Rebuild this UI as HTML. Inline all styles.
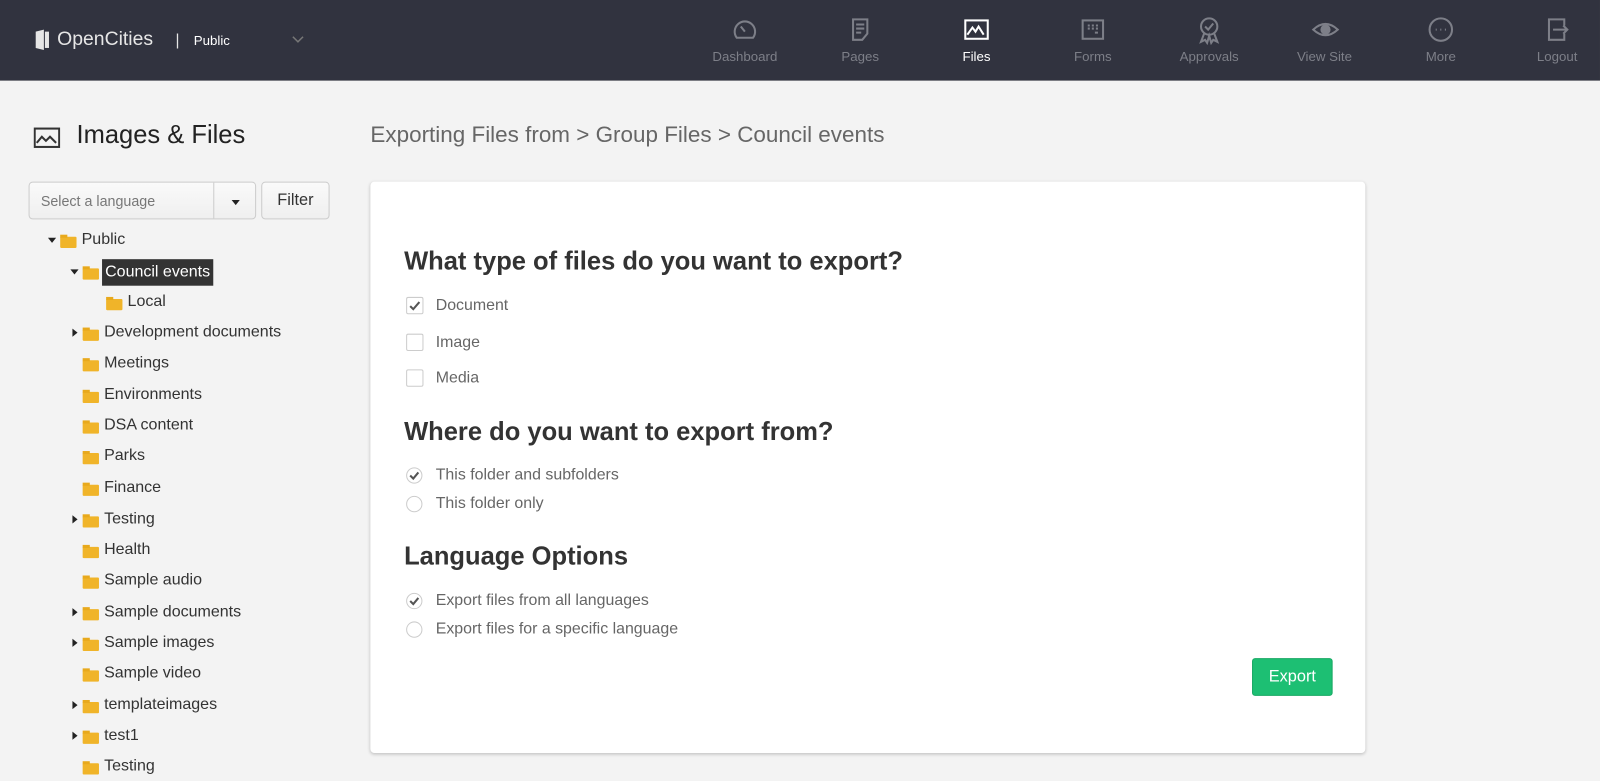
<!DOCTYPE html>
<html><head><meta charset="utf-8"><style>
*{box-sizing:border-box;margin:0;padding:0}
body{width:1600px;height:780px;overflow:hidden;background:#f3f3f3;font-family:"Liberation Sans",Arial,sans-serif;position:relative}
.wrap{position:absolute;left:0;top:0;width:1568px;height:765px;transform:scale(1.0204);transform-origin:0 0}
.hdr{position:absolute;left:0;top:0;width:1568px;height:79px;background:#31333f}
.logo{position:absolute;left:34px;top:28px;color:#e6e6e6;font-size:19px;display:flex;align-items:center}
.nav{position:absolute;top:0;width:114px;height:79px;text-align:center;color:#7d7f88;font-size:13px}
.nav svg{position:absolute;left:44px;top:16px}
.nav span{position:absolute;left:0;right:0;top:48px}
.nav.on{color:#fff}
.side-h{position:absolute;left:75px;top:118px;font-size:25px;color:#222}
.sel{position:absolute;left:28px;top:178px;width:223px;height:37px;border:1px solid #ccc;border-radius:4px;background:linear-gradient(#fafafa,#efefef);font-size:14px;color:#777}
.filt{position:absolute;left:256px;top:178px;width:67px;height:37px;border:1px solid #ccc;border-radius:4px;background:linear-gradient(#fafafa,#efefef);font-size:16px;color:#333;text-align:center;line-height:35px}
.t{position:absolute;font-size:15.7px;color:#333;height:22px;line-height:22px;white-space:nowrap}
.f{position:absolute;width:16px;height:11px;background:#f0b429;border-radius:1px}
.f:before{content:"";position:absolute;left:0;top:-2px;width:7px;height:3px;background:#e8a91c}
.tri{position:absolute;width:0;height:0}
.tri.d{border-left:4px solid transparent;border-right:4px solid transparent;border-top:5px solid #222}
.tri.r{border-top:4px solid transparent;border-bottom:4px solid transparent;border-left:5px solid #222}
.bc{position:absolute;left:363px;top:119px;font-size:22px;color:#666}
.card{position:absolute;left:363px;top:178px;width:975px;height:560px;background:#fff;border-radius:4px;box-shadow:0 1px 3px rgba(0,0,0,.2)}
.h{position:absolute;left:396px;font-size:25px;font-weight:bold;color:#333}
.o{position:absolute;left:427px;font-size:15.6px;color:#666}
.cb{position:absolute;left:398px;width:17px;height:17px;border:1px solid #ccc;border-radius:2px;background:#fff}
.rd{position:absolute;left:398px;width:16px;height:16px;border:1px solid #ccc;border-radius:50%;background:#fff}
.btn{position:absolute;left:1227px;top:645px;width:79px;height:37px;background:#1dbf73;border:1px solid #16a862;border-radius:3px;color:#fff;font-size:16px;text-align:center;line-height:35px}
</style></head><body><div class="wrap">
<div class="hdr">
 <div class="logo"><svg width="16" height="22" viewBox="0 0 16 22"><path d="M1 3 L9 1 L9 21 L1 19Z" fill="#e6e6e6"/><rect x="10" y="3" width="4" height="16" fill="#e6e6e6"/></svg><span style="margin-left:6px">OpenCities</span><span style="margin-left:22px;font-size:15px">|</span><span style="margin-left:14px;font-size:13px;color:#fff">Public</span></div>
 <svg style="position:absolute;left:286px;top:35px" width="12" height="8"><path d="M1 1 L6 6 L11 1" stroke="#777" stroke-width="1.5" fill="none"/></svg>
 <div class="nav" style="left:673px"><svg width="26" height="26" viewBox="0 0 26 26" fill="none" stroke="#7d7f88" stroke-width="2"><path d="M5 21 A10 10 0 1 1 21 21 Z"/><path d="M9 10 L13 15"/></svg><span>Dashboard</span></div>
 <div class="nav" style="left:786px"><svg width="26" height="26" viewBox="0 0 26 26" fill="none" stroke="#7d7f88" stroke-width="2"><path d="M6 3 H20 V17 L15 23 H6 Z M9 8 H17 M9 12 H17 M9 16 H14"/></svg><span>Pages</span></div>
 <div class="nav on" style="left:900px"><svg width="26" height="26" viewBox="0 0 26 26" fill="none" stroke="#fff" stroke-width="2"><rect x="2" y="4" width="22" height="18"/><path d="M4 18 L9 11 L12 15 L15 10 L20 18"/></svg><span>Files</span></div>
 <div class="nav" style="left:1014px"><svg width="26" height="26" viewBox="0 0 26 26" fill="none" stroke="#7d7f88" stroke-width="2"><rect x="3" y="4" width="20" height="18"/><path d="M8 9h2M12 9h2M16 9h2M8 12h2M12 12h2M16 12h2M15 16h3" /></svg><span>Forms</span></div>
 <div class="nav" style="left:1128px"><svg width="26" height="28" viewBox="0 0 26 28" fill="none" stroke="#7d7f88" stroke-width="2"><circle cx="13" cy="10" r="8"/><path d="M9 10 L12 13 L17 7 M8 17 L5 25 L9 23 L11 26 L13 19 L15 26 L17 23 L21 25 L18 17"/></svg><span>Approvals</span></div>
 <div class="nav" style="left:1241px"><svg width="28" height="26" viewBox="0 0 28 26" fill="none" stroke="#7d7f88" stroke-width="2"><path d="M2 13 Q14 2 26 13 Q14 24 2 13Z"/><circle cx="14" cy="13" r="4" fill="#7d7f88"/></svg><span>View Site</span></div>
 <div class="nav" style="left:1355px"><svg width="26" height="26" viewBox="0 0 26 26" fill="none" stroke="#7d7f88" stroke-width="2"><circle cx="13" cy="13" r="11"/><path d="M8 13h1M12.5 13h1M17 13h1"/></svg><span>More</span></div>
 <div class="nav" style="left:1469px"><svg width="26" height="26" viewBox="0 0 26 26" fill="none" stroke="#7d7f88" stroke-width="2"><path d="M20 9 V3 H5 V23 H20 V17 M9 13 H23 M19 9 L23 13 L19 17"/></svg><span>Logout</span></div>
</div>

<svg style="position:absolute;left:33px;top:125px" width="26" height="20" viewBox="0 0 26 20" fill="none" stroke="#333" stroke-width="2"><rect x="1" y="1" width="24" height="18"/><path d="M3 15 L8 9 L12 13 L16 9 L22 15"/></svg>
<div class="side-h">Images &amp; Files</div>
<div class="sel"><span style="position:absolute;left:11px;top:10px">Select a language</span><div style="position:absolute;left:180px;top:0;width:1px;height:35px;background:#ccc"></div><div class="tri d" style="left:198px;top:17px"></div></div>
<div class="filt">Filter</div>

<div class="tri d" style="left:47px;top:233px"></div><div class="f" style="left:59px;top:232px"></div><div class="t" style="left:80px;top:224px">Public</div>
<div class="tri d" style="left:69px;top:264px"></div><div class="f" style="left:81px;top:263px"></div><div class="t" style="left:100px;top:254px;background:#333;color:#fff;padding:0 3px;height:26px;line-height:26px">Council events</div>
<div class="f" style="left:104px;top:293px"></div><div class="t" style="left:125px;top:285px">Local</div>
<div class="tri r" style="left:71px;top:322px"></div><div class="f" style="left:81px;top:323px"></div><div class="t" style="left:102px;top:315px">Development documents</div>
<div class="f" style="left:81px;top:353px"></div><div class="t" style="left:102px;top:345px">Meetings</div>
<div class="f" style="left:81px;top:384px"></div><div class="t" style="left:102px;top:376px">Environments</div>
<div class="f" style="left:81px;top:414px"></div><div class="t" style="left:102px;top:406px">DSA content</div>
<div class="f" style="left:81px;top:444px"></div><div class="t" style="left:102px;top:436px">Parks</div>
<div class="f" style="left:81px;top:475px"></div><div class="t" style="left:102px;top:467px">Finance</div>
<div class="tri r" style="left:71px;top:505px"></div><div class="f" style="left:81px;top:506px"></div><div class="t" style="left:102px;top:498px">Testing</div>
<div class="f" style="left:81px;top:536px"></div><div class="t" style="left:102px;top:528px">Health</div>
<div class="f" style="left:81px;top:566px"></div><div class="t" style="left:102px;top:558px">Sample audio</div>
<div class="tri r" style="left:71px;top:596px"></div><div class="f" style="left:81px;top:597px"></div><div class="t" style="left:102px;top:589px">Sample documents</div>
<div class="tri r" style="left:71px;top:626px"></div><div class="f" style="left:81px;top:627px"></div><div class="t" style="left:102px;top:619px">Sample images</div>
<div class="f" style="left:81px;top:657px"></div><div class="t" style="left:102px;top:649px">Sample video</div>
<div class="tri r" style="left:71px;top:687px"></div><div class="f" style="left:81px;top:688px"></div><div class="t" style="left:102px;top:680px">templateimages</div>
<div class="tri r" style="left:71px;top:717px"></div><div class="f" style="left:81px;top:718px"></div><div class="t" style="left:102px;top:710px">test1</div>
<div class="f" style="left:81px;top:748px"></div><div class="t" style="left:102px;top:740px">Testing</div>

<div class="bc">Exporting Files from &gt; Group Files &gt; Council events</div>
<div class="card"></div>
<div class="h" style="top:242px">What type of files do you want to export?</div>
<div class="cb" style="top:291px"><svg width="15" height="15" style="position:absolute;left:0;top:0"><path d="M3 8 L6 11 L12 4" stroke="#555" stroke-width="2" fill="none"/></svg></div><div class="o" style="top:291px">Document</div>
<div class="cb" style="top:327px"></div><div class="o" style="top:327px">Image</div>
<div class="cb" style="top:362px"></div><div class="o" style="top:362px">Media</div>
<div class="h" style="top:409px">Where do you want to export from?</div>
<div class="rd" style="top:458px"><svg width="14" height="14" style="position:absolute;left:0;top:0"><path d="M3 7 L6 10 L11 4" stroke="#555" stroke-width="2" fill="none"/></svg></div><div class="o" style="top:457px">This folder and subfolders</div>
<div class="rd" style="top:486px"></div><div class="o" style="top:485px">This folder only</div>
<div class="h" style="top:531px">Language Options</div>
<div class="rd" style="top:581px"><svg width="14" height="14" style="position:absolute;left:0;top:0"><path d="M3 7 L6 10 L11 4" stroke="#555" stroke-width="2" fill="none"/></svg></div><div class="o" style="top:580px">Export files from all languages</div>
<div class="rd" style="top:609px"></div><div class="o" style="top:608px">Export files for a specific language</div>
<div class="btn">Export</div>
</div></body></html>
